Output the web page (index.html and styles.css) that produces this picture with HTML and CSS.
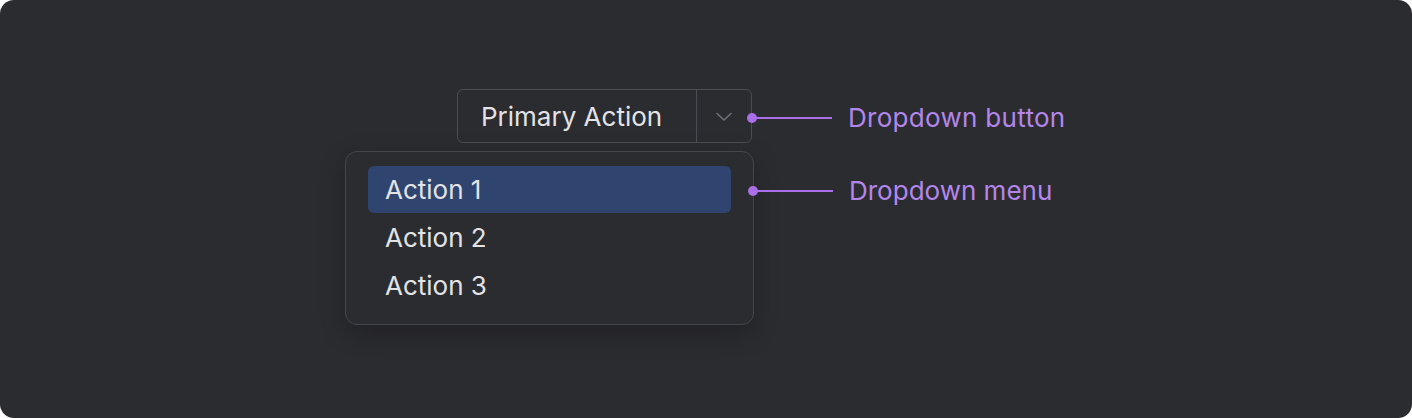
FILE: index.html
```html
<!DOCTYPE html>
<html>
<head>
<meta charset="utf-8">
<link rel="stylesheet" href="styles.css">
</head>
<body>
<div class="panel">
  <div class="stack">
    <div class="btn-row">
      <div class="split">
        <div class="split-main">Primary Action</div>
        <div class="split-toggle">
          <svg width="18" height="11" viewBox="0 0 18 11"><path d="M2 2.5 L9 9 L16 2.5" fill="none" stroke="#707177" stroke-width="1.6" stroke-linecap="round" stroke-linejoin="round"/></svg>
        </div>
        <div class="callout callout-btn"><span class="dot"></span><span class="line"></span><span class="label">Dropdown button</span></div>
      </div>
    </div>
    <div class="menu">
      <div class="item active">Action 1</div>
      <div class="item">Action 2</div>
      <div class="item">Action 3</div>
      <div class="callout callout-menu"><span class="dot"></span><span class="line"></span><span class="label">Dropdown menu</span></div>
    </div>
  </div>
</div>
</body>
</html>
```

FILE: styles.css
```css
html, body { margin: 0; padding: 0; background: #ffffff; }
body { font-family: Inter, "Noto Sans", sans-serif; }
.panel {
  width: 1412px;
  height: 418px;
  background: #2b2c30;
  border-radius: 14px;
  box-sizing: border-box;
  padding: 89px 0 0 345px;
}
.stack { display: flex; flex-direction: column; align-items: flex-start; gap: 8px; }
.btn-row { padding-left: 112px; }
.split {
  position: relative;
  display: flex;
  height: 54px;
  box-sizing: border-box;
  border: 1px solid #4c4d52;
  border-radius: 6px;
}
.split-main {
  width: 239px;
  box-sizing: border-box;
  padding-left: 23px;
  display: flex;
  align-items: center;
  font-size: 26px;
  color: #e3e3e6;
  border-right: 1px solid #4c4d52;
}
.split-toggle {
  width: 54px;
  display: flex;
  align-items: center;
  justify-content: center;
  padding-top: 1px;
}
.menu {
  position: relative;
  width: 409px;
  box-sizing: border-box;
  border: 1px solid #45464b;
  border-radius: 12px;
  padding: 14px 22px 15px 22px;
  display: flex;
  flex-direction: column;
  gap: 1px;
  box-shadow: 0 8px 24px rgba(0,0,0,0.25);
}
.item {
  height: 47px;
  border-radius: 6px;
  padding-left: 17px;
  display: flex;
  align-items: center;
  font-size: 26px;
  color: #e3e3e6;
}
.item.active { background: #2f4570; }
.callout {
  position: absolute;
  display: flex;
  align-items: center;
}
.callout-btn { left: 289px; top: 12px; }
.callout-menu { left: 402px; top: 23px; }
.dot {
  width: 10px; height: 10px; border-radius: 50%;
  background: #a96ee8;
}
.line { width: 76px; height: 2px; background: #a96ee8; margin-left: -1px; }
.label {
  margin-left: 16px;
  font-size: 26px;
  color: #b486ec;
  white-space: nowrap;
}
.callout-btn .label { letter-spacing: 0.3px; }
```
